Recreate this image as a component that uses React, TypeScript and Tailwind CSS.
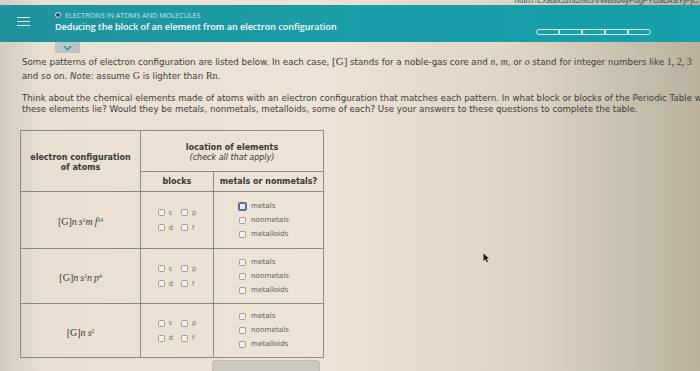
import React from 'react';

const Box = ({ focus = false }: { focus?: boolean }) => (
  <span
    className={
      focus
        ? 'inline-block w-[9px] h-[9px] rounded-[2px] border-2 border-[#5a6f96] bg-[#e9e6ee] shrink-0'
        : 'inline-block w-[7px] h-[7px] rounded-[1.5px] border border-[#9c9893] bg-[#f4f1ec] shrink-0'
    }
  />
);

const Blocks = () => (
  <div className="grid grid-cols-[auto_auto] gap-x-[8px] gap-y-[7px] justify-center">
    {['s', 'p', 'd', 'f'].map((b) => (
      <div key={b} className="flex items-center gap-[4px] text-[7px] leading-[8px] text-[#77736d]">
        <Box />
        <span>{b}</span>
      </div>
    ))}
  </div>
);

const Metals = ({ focus = false }: { focus?: boolean }) => (
  <div className="flex flex-col gap-[5px] pl-[24px]">
    {['metals', 'nonmetals', 'metalloids'].map((m, i) => (
      <div key={m} className="flex items-center gap-[4px] text-[7.2px] text-[#5d5a56] h-[9px]">
        <span className="w-[9px] flex justify-center">
          <Box focus={focus && i === 0} />
        </span>
        <span>{m}</span>
      </div>
    ))}
  </div>
);

const Formula = ({ children }: { children: React.ReactNode }) => (
  <span className="font-['Liberation_Serif',serif] text-[10px] text-[#3d3a37]">{children}</span>
);

const rows = [
  {
    h: 'h-[57px]',
    f: (
      <Formula>
        [G]<i>n</i>&thinsp;<i>s</i>
        <sup className="text-[5.5px]">2</sup>
        <i>m</i>&thinsp;<i>f</i>
        <sup className="text-[5.5px]">14</sup>
      </Formula>
    ),
    focus: true,
  },
  {
    h: 'h-[55px]',
    f: (
      <Formula>
        [G]<i>n</i>&thinsp;<i>s</i>
        <sup className="text-[5.5px]">2</sup>
        <i>n</i>&thinsp;<i>p</i>
        <sup className="text-[5.5px]">4</sup>
      </Formula>
    ),
  },
  {
    h: 'h-[54px]',
    f: (
      <Formula>
        [G]<i>n</i>&thinsp;<i>s</i>
        <sup className="text-[5.5px]">2</sup>
      </Formula>
    ),
  },
];

const serif = "font-['Liberation_Serif',serif]";

export default function App() {
  return (
    <div className="relative w-[700px] h-[371px] overflow-hidden bg-[linear-gradient(90deg,#d3cbc1_0%,#e8dfd2_6%,#ede4d7_45%,#ddd4c4_75%,#bab29f_100%)] font-['DejaVu_Sans',sans-serif]">
      {/* url strip */}
      <div className="h-[5px] overflow-hidden flex justify-end pr-[2px]">
        <span className="-mt-[3px] text-[8px] leading-[8px] text-[#3a4a55] font-['Liberation_Sans',sans-serif]">
          hutrl7-LXBax5zhl2l9tGVWeb64yFugFYUacASYjPjC
        </span>
      </div>

      {/* teal header */}
      <div className="h-[37px] flex items-center bg-[linear-gradient(90deg,#1f929c,#1a9ea8_50%,#16a0aa)]">
        <div className="w-[55px] flex pl-[17px] -mt-[4px]">
          <div className="flex flex-col gap-[2.5px]">
            <span className="block w-[13px] h-[1.5px] bg-[#d9eef0]" />
            <span className="block w-[13px] h-[1.5px] bg-[#d9eef0]" />
            <span className="block w-[13px] h-[1.5px] bg-[#d9eef0]" />
          </div>
        </div>
        <div className="flex-1 flex flex-col gap-[3px] -mt-[4px] font-['Open_Sans',sans-serif]">
          <div className="flex items-center gap-[4px] text-[7.2px] leading-[8px] text-[#c9e7ea]">
            <span className="inline-block w-[6px] h-[6px] rounded-full border-[1.5px] border-[#dcefff] bg-[#1d3d66]" />
            <span>ELECTRONS IN ATOMS AND MOLECULES</span>
          </div>
          <div className="text-[9px] leading-[10px] font-semibold text-white">
            Deducing the block of an element from an electron configuration
          </div>
        </div>
        <div className="flex mr-[49px] mt-[17px]">
          {[0, 1, 2, 3, 4].map((i) => (
            <span
              key={i}
              className={
                'block w-[23px] h-[6px] border border-[#d6f0f2] ' +
                (i === 0 ? 'rounded-l-full' : '') +
                (i === 4 ? 'rounded-r-full' : '')
              }
            />
          ))}
        </div>
      </div>

      {/* dropdown tab */}
      <div className="ml-[55px] w-[25px] h-[11px] bg-[#b9c6c4] flex items-center justify-center">
        <svg width="9" height="6" viewBox="0 0 9 6">
          <path d="M1 1.2 L4.5 4.6 L8 1.2" stroke="#2a8f9a" strokeWidth="1.5" fill="none" />
        </svg>
      </div>

      {/* instructions */}
      <div className="pl-[22px] text-[8.7px] text-[#3e3b38] whitespace-nowrap">
        <p className="mt-[1px] leading-[14px]">
          Some patterns of electron configuration are listed below. In each case,{' '}
          <span className={`${serif} text-[11px]`}>[G]</span> stands for a noble-gas core and{' '}
          <i className={`${serif} text-[9.5px]`}>n</i>, <i className={`${serif} text-[9.5px]`}>m</i>, or{' '}
          <i className={`${serif} text-[9.5px]`}>o</i> stand for integer numbers like{' '}
          <span className={`${serif} text-[10px]`}>1, 2, 3</span>
          <br />
          and so on. <i>Note:</i> assume <span className={`${serif} text-[10px]`}>G</span> is lighter than{' '}
          <span className={`${serif} text-[10px]`}>Rn</span>.
        </p>
        <p className="mt-[10px] leading-[11px]">
          Think about the chemical elements made of atoms with an electron configuration that matches each pattern. In
          what block or blocks of the Periodic Table would
          <br />
          these elements lie? Would they be metals, nonmetals, metalloids, some of each? Use your answers to these
          questions to complete the table.
        </p>
      </div>

      {/* table */}
      <table className="ml-[20px] mt-[15px] border-collapse text-[#3a3734] table-fixed">
        <tbody>
          <tr className="h-[41px]">
            <th
              rowSpan={2}
              className="w-[120px] border border-[#8d8882] text-[8px] leading-[10px] font-bold align-middle pt-[4px]"
            >
              electron configuration
              <br />
              of atoms
            </th>
            <th colSpan={2} className="border border-[#8d8882] text-[8px] leading-[10px] font-bold align-middle pt-[4px]">
              location of elements
              <br />
              <span className="font-normal italic">(check all that apply)</span>
            </th>
          </tr>
          <tr className="h-[20px]">
            <th className="w-[73px] border border-[#8d8882] text-[8px] font-bold">blocks</th>
            <th className="w-[110px] border border-[#8d8882] text-[8px] font-bold whitespace-nowrap">
              metals or nonmetals?
            </th>
          </tr>
          {rows.map((r, i) => (
            <tr key={i} className={r.h}>
              <td className="border border-[#8d8882] text-center align-middle">{r.f}</td>
              <td className="border border-[#8d8882] align-middle">
                <Blocks />
              </td>
              <td className="border border-[#8d8882] align-middle">
                <Metals focus={r.focus} />
              </td>
            </tr>
          ))}
        </tbody>
      </table>

      {/* partially visible button below table */}
      <div className="ml-[212px] mt-[2px] w-[108px] h-[14px] rounded-t-[3px] bg-[#cdc9c2] border border-[#bdb8b0]" />

      {/* mouse cursor */}
      <svg className="absolute left-[483px] top-[253px]" width="7" height="10" viewBox="0 0 7 10">
        <path d="M0.5 0.5 L0.5 8 L2.4 6.3 L3.8 9.3 L5 8.8 L3.6 5.8 L6 5.6 Z" fill="#1e1c1a" />
      </svg>
    </div>
  );
}
